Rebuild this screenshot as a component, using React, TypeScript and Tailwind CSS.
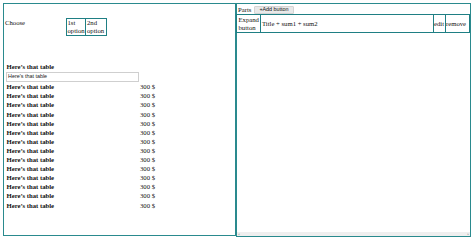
import React from "react";

const rows = Array.from({ length: 14 });

export default function App() {
  return (
    <div className="w-[474px] h-[241px] bg-white text-[#111] font-['Liberation_Serif',serif] text-[6.7px] leading-[7.5px] overflow-hidden">
      <div className="flex pt-[3px] pl-[3px]">
        {/* Left panel */}
        <div className="w-[233px] h-[233px] border border-[#2a8a8e] flex flex-col px-[1px]">
          <div className="flex items-start mt-[13.5px]">
            <div className="w-[60.5px] pt-[1.5px]">Choose</div>
            <div className="flex border border-[#1f7f84]">
              <div className="w-[19.5px] h-[16px] px-[1px] pt-[0.5px] border-r border-[#1f7f84]">
                1st
                <br />
                option
              </div>
              <div className="w-[19.5px] h-[16px] px-[1px] pt-[0.5px]">
                2nd
                <br />
                option
              </div>
            </div>
          </div>
          <div className="mt-[27px] pl-[1.5px] font-bold">Here’s that table</div>
          <div className="mt-[2px] ml-[0.5px] w-[133px] h-[10px] border border-[#cfcfcf] bg-white flex items-center pl-[1.5px] font-['Liberation_Sans',sans-serif] text-[5.4px] text-[#222]">
            Here's that table
          </div>
          <div className="flex flex-col mt-[0.5px]">
            {rows.map((_, i) => (
              <div key={i} className="h-[9.1px] flex items-center">
                <div className="w-[135px] pl-[1.5px] font-bold">Here’s that table</div>
                <div>300 $</div>
              </div>
            ))}
          </div>
        </div>
        {/* Right panel */}
        <div className="w-[235px] h-[234px] border border-[#2a8a8e] flex flex-col">
          <div className="flex items-center h-[10px] pl-[1px] pt-[1px]">
            <span>Parts</span>
            <span className="ml-[3px] h-[8px] px-[4px] bg-[#e9e9e9] border border-[#d4d4d4] rounded-[1px] flex items-center font-['Liberation_Sans',sans-serif] text-[5.4px] text-[#111]">
              +Add button
            </span>
          </div>
          <div className="flex h-[18.5px] border border-[#1f7f84] -ml-px">
            <div className="w-[23.5px] pl-[1.5px] pt-[1px] border-r border-[#1f7f84]">
              Expand
              <br />
              button
            </div>
            <div className="flex-1 flex items-center pl-[1.5px] border-r border-[#1f7f84]">
              Title + sum1 + sum2
            </div>
            <div className="w-[12px] flex items-center pl-[0.5px] border-r border-[#1f7f84]">edit</div>
            <div className="w-[23.5px] flex items-center pl-[0.5px]">remove</div>
          </div>
          <div className="flex-1" />
          <div className="h-[4px] bg-[#efefef] flex items-center justify-between px-[1px] text-[#a0a0a0] text-[3px] leading-[3px] font-['DejaVu_Sans',sans-serif]">
            <span>◂</span>
            <span>▸</span>
          </div>
        </div>
      </div>
    </div>
  );
}
